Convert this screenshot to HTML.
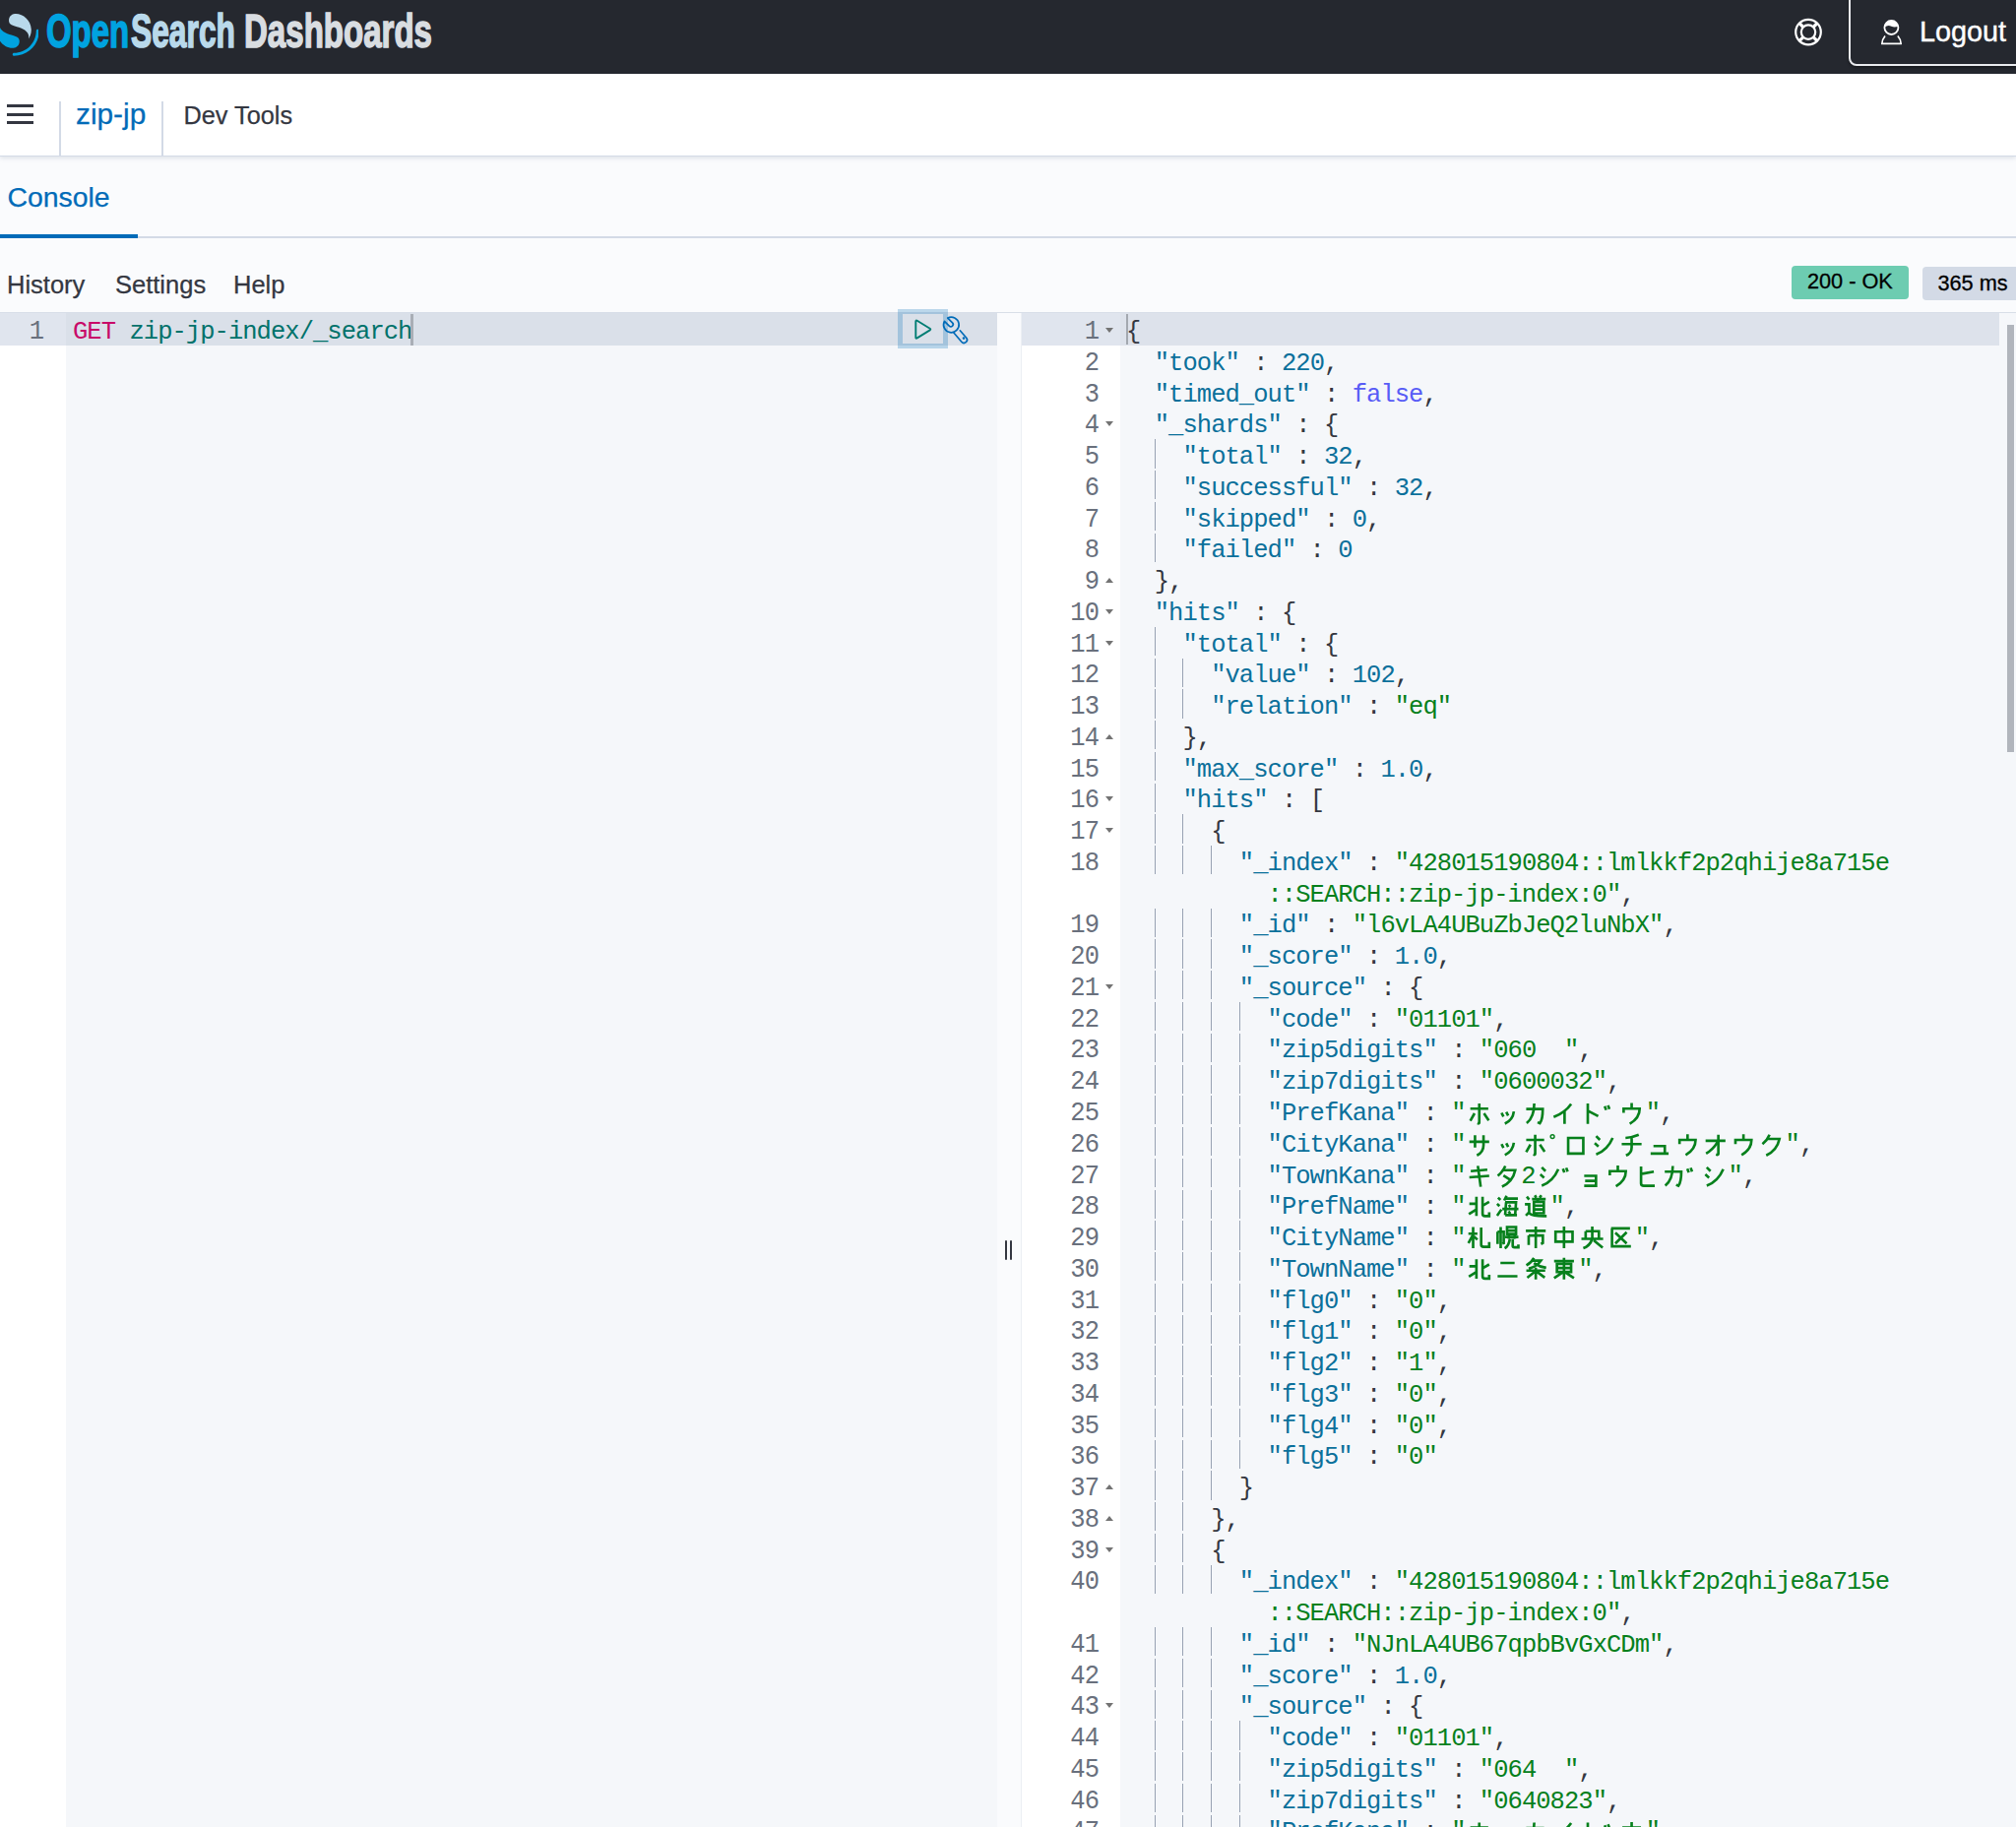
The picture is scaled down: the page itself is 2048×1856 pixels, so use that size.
<!DOCTYPE html>
<html><head><meta charset="utf-8">
<style>
html,body{margin:0;padding:0;width:2048px;height:1856px;overflow:hidden;background:#fafbfd;font-family:"Liberation Sans",sans-serif;}
.a{position:absolute;}
#hdr{position:absolute;left:0;top:0;width:2048px;height:75px;background:#25282f;}
#bc{position:absolute;left:0;top:75px;width:2048px;height:83px;background:#fff;box-shadow:0 1px 0 #d3dae6,0 3px 4px rgba(152,162,179,.25);}
.sep{position:absolute;top:28px;width:1.5px;height:55px;background:#d3dae6;}
.hb{position:absolute;left:7px;width:27px;height:3.2px;background:#343741;}
.txt{position:absolute;white-space:pre;line-height:1;}
#tabline{position:absolute;left:0;top:240px;width:2048px;height:2px;background:#d3dae6;}
#tabul{position:absolute;left:0;top:238px;width:140px;height:4px;background:#006bb8;}
.badge{position:absolute;border-radius:4px;}
/* editors */
#ed{position:absolute;left:0;top:318px;width:1013px;height:1538px;background:#f5f7fa;}
#edg{position:absolute;left:0;top:318px;width:67px;height:1538px;background:#fff;}
#div{position:absolute;left:1013px;top:318px;width:24px;height:1538px;background:#fafbfd;}
#divb{position:absolute;left:1037px;top:318px;width:1px;height:1538px;background:#eceff4;}
#edtop{position:absolute;left:0;top:317px;width:2048px;height:1px;background:#d8dee8;}
#out{position:absolute;left:1138px;top:318px;width:910px;height:1538px;background:#f5f7fa;}
#outg{position:absolute;left:1038px;top:318px;width:100px;height:1538px;background:#fff;}
.al{position:absolute;top:318px;height:32.6px;}
.tx,.ln,.etx{position:absolute;font-family:"Liberation Mono",monospace;font-size:25.5px;line-height:31.76px;height:31.76px;white-space:pre;letter-spacing:-0.95px;}
.tx{margin-top:4px;transform:scaleY(1.02);transform-origin:0 22.67px;}
.ln{left:1030px;width:86px;text-align:right;color:#69707d;margin-top:4px;transform:scaleY(1.07);transform-origin:0 22.67px;}
.p{color:#343741}.k{color:#0b709b}.n{color:#0b709b}.s{color:#06801c}.b{color:#585cf6}
.fo,.fc{position:absolute;left:1122.5px;width:0;height:0;border-left:4.5px solid transparent;border-right:4.5px solid transparent;}
.fo{margin-top:15px;border-top:5px solid #737373;}
.fc{margin-top:15px;border-bottom:5px solid #737373;}
.ig{position:absolute;width:1.2px;height:29.2px;margin-top:1.3px;margin-left:-0.2px;background:#98a2b3;}
</style></head><body>
<div id="hdr">
  <svg class="a" style="left:-3.5px;top:13.8px" width="42.8" height="42.8" viewBox="0 0 64 64">
    <path fill="#00A3E0" d="M61.7374 23.5C60.4878 23.5 59.4748 24.513 59.4748 25.7626C59.4748 44.3813 44.3813 59.4748 25.7626 59.4748C24.513 59.4748 23.5 60.4878 23.5 61.7374C23.5 62.987 24.513 64 25.7626 64C46.8805 64 64 46.8805 64 25.7626C64 24.513 62.987 23.5 61.7374 23.5Z"/>
    <path fill="#B9D9EB" d="M48.0814 38C50.2572 34.4505 52.3615 29.7178 51.9475 23.0921C51.0899 9.36725 38.6589 -1.04463 26.9206 0.0837327C22.3253 0.525465 17.6068 4.2712 18.026 10.9805C18.2082 13.8961 19.6352 15.6169 21.9544 16.9399C24.1618 18.1992 26.9978 18.9969 30.2128 19.9011C34.0962 20.9934 38.6009 22.2203 42.063 24.7717C46.2125 27.8295 49.0491 31.3743 48.0814 38Z"/>
    <path fill="#00A3E0" d="M3.91861 14C1.74276 17.5495 -0.361506 22.2822 0.0524931 28.9079C0.910072 42.6327 13.3411 53.0446 25.0794 51.9163C29.6747 51.4745 34.3932 47.7288 33.974 41.0195C33.7918 38.1039 32.3647 36.3831 30.0456 35.0601C27.8382 33.8008 25.0022 33.0031 21.7872 32.0989C17.9038 31.0066 13.3991 29.7797 9.93694 27.2283C5.78746 24.1704 2.95092 20.6257 3.91861 14Z"/>
  </svg>
  <svg class="a" style="left:0;top:0" width="460" height="75" viewBox="0 0 460 75">
    <text x="47" y="47.7" font-family="Liberation Sans" font-weight="bold" font-size="48.4" fill="#00a3e0" stroke="#00a3e0" stroke-width="1.6" textLength="84" lengthAdjust="spacingAndGlyphs">Open</text>
    <text x="133" y="47.7" font-family="Liberation Sans" font-weight="bold" font-size="48.4" fill="#b9d9eb" stroke="#b9d9eb" stroke-width="1.6" textLength="106" lengthAdjust="spacingAndGlyphs">Search</text>
    <text x="248" y="47.7" font-family="Liberation Sans" font-weight="bold" font-size="48.4" fill="#d9dde1" stroke="#d9dde1" stroke-width="1.6" textLength="191" lengthAdjust="spacingAndGlyphs">Dashboards</text>
  </svg>
  <svg class="a" style="left:1822px;top:18px" width="30" height="30" viewBox="0 0 30 30">
    <circle cx="15" cy="14.6" r="12.8" fill="none" stroke="#fff" stroke-width="2.2"/>
    <circle cx="15" cy="14.6" r="7.2" fill="none" stroke="#fff" stroke-width="2.2"/>
    <g stroke="#fff" stroke-width="3.2"><line x1="6" y1="5.6" x2="9.9" y2="9.5"/><line x1="24" y1="5.6" x2="20.1" y2="9.5"/><line x1="6" y1="23.6" x2="9.9" y2="19.7"/><line x1="24" y1="23.6" x2="20.1" y2="19.7"/></g>
  </svg>
  <div class="a" style="left:1878px;top:-10px;width:200px;height:76.5px;border:2px solid #e9ebee;border-radius:8px;box-shadow:0 2px 3px rgba(0,0,0,.35);box-sizing:border-box;"></div>
  <svg class="a" style="left:1909px;top:19px" width="26" height="28" viewBox="0 0 26 28">
    <circle cx="12.4" cy="9" r="7" fill="none" stroke="#fff" stroke-width="1.8"/>
    <path d="M5.6 8.6 Q9 5.8 12.4 7.8 Q15.5 9.4 19.3 7.8 L18.8 5.5 Q15.5 1.6 12.4 2 Q7.4 2.4 5.6 8.6Z" fill="#fff"/>
    <path d="M6 17.5 Q2.8 21.5 2.8 25.4 L22.2 25.4 Q22.2 21.5 18.9 17.5" fill="none" stroke="#fff" stroke-width="1.7" stroke-linejoin="round"/>
  </svg>
  <div class="txt" style="left:1950px;top:18.2px;font-size:28.8px;color:#fff;-webkit-text-stroke:0.4px #fff;">Logout</div>
</div>
<div id="bc">
  <div class="hb" style="top:31px"></div><div class="hb" style="top:39.6px"></div><div class="hb" style="top:48.2px"></div>
  <div class="sep" style="left:60.3px"></div>
  <div class="sep" style="left:164.2px"></div>
  <div class="txt" style="left:77px;top:25.8px;font-size:29.8px;color:#006bb8;-webkit-text-stroke:0.25px #006bb8;">zip-jp</div>
  <div class="txt" style="left:186.5px;top:29.5px;font-size:25.3px;color:#343741;-webkit-text-stroke:0.25px #343741;">Dev Tools</div>
</div>
<div class="txt" style="left:7.5px;top:185.8px;font-size:28.4px;color:#006bb8;-webkit-text-stroke:0.25px #006bb8;">Console</div>
<div id="tabline"></div><div id="tabul"></div>
<div class="txt" style="left:7px;top:276.5px;font-size:25.5px;color:#343741;-webkit-text-stroke:0.25px #343741;">History</div>
<div class="txt" style="left:117px;top:276.5px;font-size:25.5px;color:#343741;-webkit-text-stroke:0.25px #343741;">Settings</div>
<div class="txt" style="left:237px;top:276.5px;font-size:25.5px;color:#343741;-webkit-text-stroke:0.25px #343741;">Help</div>
<div class="badge" style="left:1820px;top:269.5px;width:119px;height:34.5px;background:#6dccb1;"></div>
<div class="txt" style="left:1836px;top:275.3px;font-size:21.7px;color:#000;-webkit-text-stroke:0.3px #000;">200 - OK</div>
<div class="badge" style="left:1953px;top:271.2px;width:120px;height:34.2px;background:#d3dae6;"></div>
<div class="txt" style="left:1968.5px;top:277px;font-size:21.7px;color:#000;-webkit-text-stroke:0.3px #000;">365 ms</div>

<div id="ed"></div><div id="edg"></div>
<div id="div"></div><div id="divb"></div>
<div id="outg"></div><div id="out"></div>
<div id="edtop"></div>
<div class="al" style="left:0;width:67px;background:#e0e5ee;"></div>
<div class="al" style="left:67px;width:946px;background:#dae0e9;"></div>
<div class="al" style="left:1038px;width:100px;background:#e0e5ee;"></div>
<div class="al" style="left:1138px;width:893px;background:#dde2eb;"></div>
<div class="ln" style="left:0;width:44px;top:318px">1</div>
<div class="tx" style="left:74px;top:318px"><span style="color:#c80a68">GET</span> <span style="color:#00726b">zip-jp-index/_search</span></div>
<div class="a" style="left:416.5px;top:318.5px;width:3px;height:32px;background:#a9aeb6;"></div>
<div class="a" style="left:1144px;top:319px;width:2px;height:31px;background:#a3a8b0;"></div>
<!-- play/wrench -->
<div class="a" style="left:912px;top:314.2px;width:51px;height:39.4px;box-sizing:border-box;border:5px solid rgba(0,107,184,.25);"></div>
<svg class="a" style="left:926px;top:322px" width="24" height="26" viewBox="0 0 24 26">
  <path d="M4.3 4.4 Q4.3 2.9 5.7 3.8 L18.7 11.8 Q19.9 12.6 18.7 13.4 L5.7 21.4 Q4.3 22.3 4.3 20.8 Z" fill="none" stroke="#017d73" stroke-width="1.9" stroke-linejoin="round"/>
</svg>
<svg class="a" style="left:950px;top:315px" width="40" height="40" viewBox="0 0 40 40">
  <g fill="none" stroke="#006bb8" stroke-width="1.7" stroke-linecap="round" stroke-linejoin="round">
  <path d="M9.46 11.32A7.8 7.8 0 1 0 12.72 8.06L17.53 12.87A2.3 2.3 0 0 1 14.27 16.13Z"/>
  <path d="M25.27 20.78L31.76 28.2A3.2 3.2 0 0 1 26.8 32.24L18.67 22.8"/>
  </g>
  <circle cx="29" cy="28.6" r="1.3" fill="#006bb8"/>
</svg>
<!-- divider handle -->
<div class="a" style="left:1021px;top:1259.5px;width:2.2px;height:20px;background:#343741;border-radius:1px;"></div>
<div class="a" style="left:1026.3px;top:1259.5px;width:2.2px;height:20px;background:#343741;border-radius:1px;"></div>
<!-- scrollbar -->
<div class="a" style="left:2039px;top:329.6px;width:7px;height:434px;background:#b1b5bc;"></div>
<div class="ln" style="top:318.00px">1</div>
<div class="fo" style="top:318.00px"></div>
<div class="ln" style="top:349.76px">2</div>
<div class="ln" style="top:381.52px">3</div>
<div class="ln" style="top:413.28px">4</div>
<div class="fo" style="top:413.28px"></div>
<div class="ln" style="top:445.04px">5</div>
<div class="ln" style="top:476.80px">6</div>
<div class="ln" style="top:508.56px">7</div>
<div class="ln" style="top:540.32px">8</div>
<div class="ln" style="top:572.08px">9</div>
<div class="fc" style="top:572.08px"></div>
<div class="ln" style="top:603.84px">10</div>
<div class="fo" style="top:603.84px"></div>
<div class="ln" style="top:635.60px">11</div>
<div class="fo" style="top:635.60px"></div>
<div class="ln" style="top:667.36px">12</div>
<div class="ln" style="top:699.12px">13</div>
<div class="ln" style="top:730.88px">14</div>
<div class="fc" style="top:730.88px"></div>
<div class="ln" style="top:762.64px">15</div>
<div class="ln" style="top:794.40px">16</div>
<div class="fo" style="top:794.40px"></div>
<div class="ln" style="top:826.16px">17</div>
<div class="fo" style="top:826.16px"></div>
<div class="ln" style="top:857.92px">18</div>
<div class="ln" style="top:921.44px">19</div>
<div class="ln" style="top:953.20px">20</div>
<div class="ln" style="top:984.96px">21</div>
<div class="fo" style="top:984.96px"></div>
<div class="ln" style="top:1016.72px">22</div>
<div class="ln" style="top:1048.48px">23</div>
<div class="ln" style="top:1080.24px">24</div>
<div class="ln" style="top:1112.00px">25</div>
<div class="ln" style="top:1143.76px">26</div>
<div class="ln" style="top:1175.52px">27</div>
<div class="ln" style="top:1207.28px">28</div>
<div class="ln" style="top:1239.04px">29</div>
<div class="ln" style="top:1270.80px">30</div>
<div class="ln" style="top:1302.56px">31</div>
<div class="ln" style="top:1334.32px">32</div>
<div class="ln" style="top:1366.08px">33</div>
<div class="ln" style="top:1397.84px">34</div>
<div class="ln" style="top:1429.60px">35</div>
<div class="ln" style="top:1461.36px">36</div>
<div class="ln" style="top:1493.12px">37</div>
<div class="fc" style="top:1493.12px"></div>
<div class="ln" style="top:1524.88px">38</div>
<div class="fc" style="top:1524.88px"></div>
<div class="ln" style="top:1556.64px">39</div>
<div class="fo" style="top:1556.64px"></div>
<div class="ln" style="top:1588.40px">40</div>
<div class="ln" style="top:1651.92px">41</div>
<div class="ln" style="top:1683.68px">42</div>
<div class="ln" style="top:1715.44px">43</div>
<div class="fo" style="top:1715.44px"></div>
<div class="ln" style="top:1747.20px">44</div>
<div class="ln" style="top:1778.96px">45</div>
<div class="ln" style="top:1810.72px">46</div>
<div class="ln" style="top:1842.48px">47</div>
<div class="ln" style="top:1874.24px">48</div>
<div class="ig" style="left:1172.70px;top:445.04px"></div>
<div class="ig" style="left:1172.70px;top:476.80px"></div>
<div class="ig" style="left:1172.70px;top:508.56px"></div>
<div class="ig" style="left:1172.70px;top:540.32px"></div>
<div class="ig" style="left:1172.70px;top:635.60px"></div>
<div class="ig" style="left:1172.70px;top:667.36px"></div>
<div class="ig" style="left:1201.40px;top:667.36px"></div>
<div class="ig" style="left:1172.70px;top:699.12px"></div>
<div class="ig" style="left:1201.40px;top:699.12px"></div>
<div class="ig" style="left:1172.70px;top:730.88px"></div>
<div class="ig" style="left:1172.70px;top:762.64px"></div>
<div class="ig" style="left:1172.70px;top:794.40px"></div>
<div class="ig" style="left:1172.70px;top:826.16px"></div>
<div class="ig" style="left:1201.40px;top:826.16px"></div>
<div class="ig" style="left:1172.70px;top:857.92px"></div>
<div class="ig" style="left:1201.40px;top:857.92px"></div>
<div class="ig" style="left:1230.10px;top:857.92px"></div>
<div class="ig" style="left:1172.70px;top:921.44px"></div>
<div class="ig" style="left:1201.40px;top:921.44px"></div>
<div class="ig" style="left:1230.10px;top:921.44px"></div>
<div class="ig" style="left:1172.70px;top:953.20px"></div>
<div class="ig" style="left:1201.40px;top:953.20px"></div>
<div class="ig" style="left:1230.10px;top:953.20px"></div>
<div class="ig" style="left:1172.70px;top:984.96px"></div>
<div class="ig" style="left:1201.40px;top:984.96px"></div>
<div class="ig" style="left:1230.10px;top:984.96px"></div>
<div class="ig" style="left:1172.70px;top:1016.72px"></div>
<div class="ig" style="left:1201.40px;top:1016.72px"></div>
<div class="ig" style="left:1230.10px;top:1016.72px"></div>
<div class="ig" style="left:1258.80px;top:1016.72px"></div>
<div class="ig" style="left:1172.70px;top:1048.48px"></div>
<div class="ig" style="left:1201.40px;top:1048.48px"></div>
<div class="ig" style="left:1230.10px;top:1048.48px"></div>
<div class="ig" style="left:1258.80px;top:1048.48px"></div>
<div class="ig" style="left:1172.70px;top:1080.24px"></div>
<div class="ig" style="left:1201.40px;top:1080.24px"></div>
<div class="ig" style="left:1230.10px;top:1080.24px"></div>
<div class="ig" style="left:1258.80px;top:1080.24px"></div>
<div class="ig" style="left:1172.70px;top:1112.00px"></div>
<div class="ig" style="left:1201.40px;top:1112.00px"></div>
<div class="ig" style="left:1230.10px;top:1112.00px"></div>
<div class="ig" style="left:1258.80px;top:1112.00px"></div>
<div class="ig" style="left:1172.70px;top:1143.76px"></div>
<div class="ig" style="left:1201.40px;top:1143.76px"></div>
<div class="ig" style="left:1230.10px;top:1143.76px"></div>
<div class="ig" style="left:1258.80px;top:1143.76px"></div>
<div class="ig" style="left:1172.70px;top:1175.52px"></div>
<div class="ig" style="left:1201.40px;top:1175.52px"></div>
<div class="ig" style="left:1230.10px;top:1175.52px"></div>
<div class="ig" style="left:1258.80px;top:1175.52px"></div>
<div class="ig" style="left:1172.70px;top:1207.28px"></div>
<div class="ig" style="left:1201.40px;top:1207.28px"></div>
<div class="ig" style="left:1230.10px;top:1207.28px"></div>
<div class="ig" style="left:1258.80px;top:1207.28px"></div>
<div class="ig" style="left:1172.70px;top:1239.04px"></div>
<div class="ig" style="left:1201.40px;top:1239.04px"></div>
<div class="ig" style="left:1230.10px;top:1239.04px"></div>
<div class="ig" style="left:1258.80px;top:1239.04px"></div>
<div class="ig" style="left:1172.70px;top:1270.80px"></div>
<div class="ig" style="left:1201.40px;top:1270.80px"></div>
<div class="ig" style="left:1230.10px;top:1270.80px"></div>
<div class="ig" style="left:1258.80px;top:1270.80px"></div>
<div class="ig" style="left:1172.70px;top:1302.56px"></div>
<div class="ig" style="left:1201.40px;top:1302.56px"></div>
<div class="ig" style="left:1230.10px;top:1302.56px"></div>
<div class="ig" style="left:1258.80px;top:1302.56px"></div>
<div class="ig" style="left:1172.70px;top:1334.32px"></div>
<div class="ig" style="left:1201.40px;top:1334.32px"></div>
<div class="ig" style="left:1230.10px;top:1334.32px"></div>
<div class="ig" style="left:1258.80px;top:1334.32px"></div>
<div class="ig" style="left:1172.70px;top:1366.08px"></div>
<div class="ig" style="left:1201.40px;top:1366.08px"></div>
<div class="ig" style="left:1230.10px;top:1366.08px"></div>
<div class="ig" style="left:1258.80px;top:1366.08px"></div>
<div class="ig" style="left:1172.70px;top:1397.84px"></div>
<div class="ig" style="left:1201.40px;top:1397.84px"></div>
<div class="ig" style="left:1230.10px;top:1397.84px"></div>
<div class="ig" style="left:1258.80px;top:1397.84px"></div>
<div class="ig" style="left:1172.70px;top:1429.60px"></div>
<div class="ig" style="left:1201.40px;top:1429.60px"></div>
<div class="ig" style="left:1230.10px;top:1429.60px"></div>
<div class="ig" style="left:1258.80px;top:1429.60px"></div>
<div class="ig" style="left:1172.70px;top:1461.36px"></div>
<div class="ig" style="left:1201.40px;top:1461.36px"></div>
<div class="ig" style="left:1230.10px;top:1461.36px"></div>
<div class="ig" style="left:1258.80px;top:1461.36px"></div>
<div class="ig" style="left:1172.70px;top:1493.12px"></div>
<div class="ig" style="left:1201.40px;top:1493.12px"></div>
<div class="ig" style="left:1230.10px;top:1493.12px"></div>
<div class="ig" style="left:1172.70px;top:1524.88px"></div>
<div class="ig" style="left:1201.40px;top:1524.88px"></div>
<div class="ig" style="left:1172.70px;top:1556.64px"></div>
<div class="ig" style="left:1201.40px;top:1556.64px"></div>
<div class="ig" style="left:1172.70px;top:1588.40px"></div>
<div class="ig" style="left:1201.40px;top:1588.40px"></div>
<div class="ig" style="left:1230.10px;top:1588.40px"></div>
<div class="ig" style="left:1172.70px;top:1651.92px"></div>
<div class="ig" style="left:1201.40px;top:1651.92px"></div>
<div class="ig" style="left:1230.10px;top:1651.92px"></div>
<div class="ig" style="left:1172.70px;top:1683.68px"></div>
<div class="ig" style="left:1201.40px;top:1683.68px"></div>
<div class="ig" style="left:1230.10px;top:1683.68px"></div>
<div class="ig" style="left:1172.70px;top:1715.44px"></div>
<div class="ig" style="left:1201.40px;top:1715.44px"></div>
<div class="ig" style="left:1230.10px;top:1715.44px"></div>
<div class="ig" style="left:1172.70px;top:1747.20px"></div>
<div class="ig" style="left:1201.40px;top:1747.20px"></div>
<div class="ig" style="left:1230.10px;top:1747.20px"></div>
<div class="ig" style="left:1258.80px;top:1747.20px"></div>
<div class="ig" style="left:1172.70px;top:1778.96px"></div>
<div class="ig" style="left:1201.40px;top:1778.96px"></div>
<div class="ig" style="left:1230.10px;top:1778.96px"></div>
<div class="ig" style="left:1258.80px;top:1778.96px"></div>
<div class="ig" style="left:1172.70px;top:1810.72px"></div>
<div class="ig" style="left:1201.40px;top:1810.72px"></div>
<div class="ig" style="left:1230.10px;top:1810.72px"></div>
<div class="ig" style="left:1258.80px;top:1810.72px"></div>
<div class="ig" style="left:1172.70px;top:1842.48px"></div>
<div class="ig" style="left:1201.40px;top:1842.48px"></div>
<div class="ig" style="left:1230.10px;top:1842.48px"></div>
<div class="ig" style="left:1258.80px;top:1842.48px"></div>
<div class="ig" style="left:1172.70px;top:1874.24px"></div>
<div class="ig" style="left:1201.40px;top:1874.24px"></div>
<div class="ig" style="left:1230.10px;top:1874.24px"></div>
<div class="ig" style="left:1258.80px;top:1874.24px"></div>
<div class="tx" style="top:318.00px;left:1144.00px"><span class="p">{</span></div>
<div class="tx" style="top:349.76px;left:1144.00px">  <span class="k">&quot;took&quot;</span> <span class="p">:</span> <span class="n">220</span><span class="p">,</span></div>
<div class="tx" style="top:381.52px;left:1144.00px">  <span class="k">&quot;timed_out&quot;</span> <span class="p">:</span> <span class="b">false</span><span class="p">,</span></div>
<div class="tx" style="top:413.28px;left:1144.00px">  <span class="k">&quot;_shards&quot;</span> <span class="p">:</span> <span class="p">{</span></div>
<div class="tx" style="top:445.04px;left:1144.00px">    <span class="k">&quot;total&quot;</span> <span class="p">:</span> <span class="n">32</span><span class="p">,</span></div>
<div class="tx" style="top:476.80px;left:1144.00px">    <span class="k">&quot;successful&quot;</span> <span class="p">:</span> <span class="n">32</span><span class="p">,</span></div>
<div class="tx" style="top:508.56px;left:1144.00px">    <span class="k">&quot;skipped&quot;</span> <span class="p">:</span> <span class="n">0</span><span class="p">,</span></div>
<div class="tx" style="top:540.32px;left:1144.00px">    <span class="k">&quot;failed&quot;</span> <span class="p">:</span> <span class="n">0</span></div>
<div class="tx" style="top:572.08px;left:1144.00px">  <span class="p">}</span><span class="p">,</span></div>
<div class="tx" style="top:603.84px;left:1144.00px">  <span class="k">&quot;hits&quot;</span> <span class="p">:</span> <span class="p">{</span></div>
<div class="tx" style="top:635.60px;left:1144.00px">    <span class="k">&quot;total&quot;</span> <span class="p">:</span> <span class="p">{</span></div>
<div class="tx" style="top:667.36px;left:1144.00px">      <span class="k">&quot;value&quot;</span> <span class="p">:</span> <span class="n">102</span><span class="p">,</span></div>
<div class="tx" style="top:699.12px;left:1144.00px">      <span class="k">&quot;relation&quot;</span> <span class="p">:</span> <span class="s">&quot;eq&quot;</span></div>
<div class="tx" style="top:730.88px;left:1144.00px">    <span class="p">}</span><span class="p">,</span></div>
<div class="tx" style="top:762.64px;left:1144.00px">    <span class="k">&quot;max_score&quot;</span> <span class="p">:</span> <span class="n">1.0</span><span class="p">,</span></div>
<div class="tx" style="top:794.40px;left:1144.00px">    <span class="k">&quot;hits&quot;</span> <span class="p">:</span> <span class="p">[</span></div>
<div class="tx" style="top:826.16px;left:1144.00px">      <span class="p">{</span></div>
<div class="tx" style="top:857.92px;left:1144.00px">        <span class="k">&quot;_index&quot;</span> <span class="p">:</span> <span class="s">&quot;428015190804::lmlkkf2p2qhije8a715e</span></div>
<div class="tx" style="top:889.68px;left:1287.50px"><span class="s">::SEARCH::zip-jp-index:0&quot;</span><span class="p">,</span></div>
<div class="tx" style="top:921.44px;left:1144.00px">        <span class="k">&quot;_id&quot;</span> <span class="p">:</span> <span class="s">&quot;l6vLA4UBuZbJeQ2luNbX&quot;</span><span class="p">,</span></div>
<div class="tx" style="top:953.20px;left:1144.00px">        <span class="k">&quot;_score&quot;</span> <span class="p">:</span> <span class="n">1.0</span><span class="p">,</span></div>
<div class="tx" style="top:984.96px;left:1144.00px">        <span class="k">&quot;_source&quot;</span> <span class="p">:</span> <span class="p">{</span></div>
<div class="tx" style="top:1016.72px;left:1144.00px">          <span class="k">&quot;code&quot;</span> <span class="p">:</span> <span class="s">&quot;01101&quot;</span><span class="p">,</span></div>
<div class="tx" style="top:1048.48px;left:1144.00px">          <span class="k">&quot;zip5digits&quot;</span> <span class="p">:</span> <span class="s">&quot;060  &quot;</span><span class="p">,</span></div>
<div class="tx" style="top:1080.24px;left:1144.00px">          <span class="k">&quot;zip7digits&quot;</span> <span class="p">:</span> <span class="s">&quot;0600032&quot;</span><span class="p">,</span></div>
<div class="tx" style="top:1112.00px;left:1144.00px">          <span class="k">&quot;PrefKana&quot;</span> <span class="p">:</span> <span class="s">&quot;<span style="display:inline-block;width:28.40px"></span><span style="display:inline-block;width:28.40px"></span><span style="display:inline-block;width:28.40px"></span><span style="display:inline-block;width:28.40px"></span><span style="display:inline-block;width:28.40px"></span><span style="display:inline-block;width:12.80px"></span><span style="display:inline-block;width:28.40px"></span>&quot;</span><span class="p">,</span></div>
<div class="tx" style="top:1143.76px;left:1144.00px">          <span class="k">&quot;CityKana&quot;</span> <span class="p">:</span> <span class="s">&quot;<span style="display:inline-block;width:28.40px"></span><span style="display:inline-block;width:28.40px"></span><span style="display:inline-block;width:28.40px"></span><span style="display:inline-block;width:12.80px"></span><span style="display:inline-block;width:28.40px"></span><span style="display:inline-block;width:28.40px"></span><span style="display:inline-block;width:28.40px"></span><span style="display:inline-block;width:28.40px"></span><span style="display:inline-block;width:28.40px"></span><span style="display:inline-block;width:28.40px"></span><span style="display:inline-block;width:28.40px"></span><span style="display:inline-block;width:28.40px"></span>&quot;</span><span class="p">,</span></div>
<div class="tx" style="top:1175.52px;left:1144.00px">          <span class="k">&quot;TownKana&quot;</span> <span class="p">:</span> <span class="s">&quot;<span style="display:inline-block;width:28.40px"></span><span style="display:inline-block;width:28.40px"></span>2<span style="display:inline-block;width:28.40px"></span><span style="display:inline-block;width:12.80px"></span><span style="display:inline-block;width:28.40px"></span><span style="display:inline-block;width:28.40px"></span><span style="display:inline-block;width:28.40px"></span><span style="display:inline-block;width:28.40px"></span><span style="display:inline-block;width:12.80px"></span><span style="display:inline-block;width:28.40px"></span>&quot;</span><span class="p">,</span></div>
<div class="tx" style="top:1207.28px;left:1144.00px">          <span class="k">&quot;PrefName&quot;</span> <span class="p">:</span> <span class="s">&quot;<span style="display:inline-block;width:28.70px"></span><span style="display:inline-block;width:28.70px"></span><span style="display:inline-block;width:28.70px"></span>&quot;</span><span class="p">,</span></div>
<div class="tx" style="top:1239.04px;left:1144.00px">          <span class="k">&quot;CityName&quot;</span> <span class="p">:</span> <span class="s">&quot;<span style="display:inline-block;width:28.70px"></span><span style="display:inline-block;width:28.70px"></span><span style="display:inline-block;width:28.70px"></span><span style="display:inline-block;width:28.70px"></span><span style="display:inline-block;width:28.70px"></span><span style="display:inline-block;width:28.70px"></span>&quot;</span><span class="p">,</span></div>
<div class="tx" style="top:1270.80px;left:1144.00px">          <span class="k">&quot;TownName&quot;</span> <span class="p">:</span> <span class="s">&quot;<span style="display:inline-block;width:28.70px"></span><span style="display:inline-block;width:28.70px"></span><span style="display:inline-block;width:28.70px"></span><span style="display:inline-block;width:28.70px"></span>&quot;</span><span class="p">,</span></div>
<div class="tx" style="top:1302.56px;left:1144.00px">          <span class="k">&quot;flg0&quot;</span> <span class="p">:</span> <span class="s">&quot;0&quot;</span><span class="p">,</span></div>
<div class="tx" style="top:1334.32px;left:1144.00px">          <span class="k">&quot;flg1&quot;</span> <span class="p">:</span> <span class="s">&quot;0&quot;</span><span class="p">,</span></div>
<div class="tx" style="top:1366.08px;left:1144.00px">          <span class="k">&quot;flg2&quot;</span> <span class="p">:</span> <span class="s">&quot;1&quot;</span><span class="p">,</span></div>
<div class="tx" style="top:1397.84px;left:1144.00px">          <span class="k">&quot;flg3&quot;</span> <span class="p">:</span> <span class="s">&quot;0&quot;</span><span class="p">,</span></div>
<div class="tx" style="top:1429.60px;left:1144.00px">          <span class="k">&quot;flg4&quot;</span> <span class="p">:</span> <span class="s">&quot;0&quot;</span><span class="p">,</span></div>
<div class="tx" style="top:1461.36px;left:1144.00px">          <span class="k">&quot;flg5&quot;</span> <span class="p">:</span> <span class="s">&quot;0&quot;</span></div>
<div class="tx" style="top:1493.12px;left:1144.00px">        <span class="p">}</span></div>
<div class="tx" style="top:1524.88px;left:1144.00px">      <span class="p">}</span><span class="p">,</span></div>
<div class="tx" style="top:1556.64px;left:1144.00px">      <span class="p">{</span></div>
<div class="tx" style="top:1588.40px;left:1144.00px">        <span class="k">&quot;_index&quot;</span> <span class="p">:</span> <span class="s">&quot;428015190804::lmlkkf2p2qhije8a715e</span></div>
<div class="tx" style="top:1620.16px;left:1287.50px"><span class="s">::SEARCH::zip-jp-index:0&quot;</span><span class="p">,</span></div>
<div class="tx" style="top:1651.92px;left:1144.00px">        <span class="k">&quot;_id&quot;</span> <span class="p">:</span> <span class="s">&quot;NJnLA4UB67qpbBvGxCDm&quot;</span><span class="p">,</span></div>
<div class="tx" style="top:1683.68px;left:1144.00px">        <span class="k">&quot;_score&quot;</span> <span class="p">:</span> <span class="n">1.0</span><span class="p">,</span></div>
<div class="tx" style="top:1715.44px;left:1144.00px">        <span class="k">&quot;_source&quot;</span> <span class="p">:</span> <span class="p">{</span></div>
<div class="tx" style="top:1747.20px;left:1144.00px">          <span class="k">&quot;code&quot;</span> <span class="p">:</span> <span class="s">&quot;01101&quot;</span><span class="p">,</span></div>
<div class="tx" style="top:1778.96px;left:1144.00px">          <span class="k">&quot;zip5digits&quot;</span> <span class="p">:</span> <span class="s">&quot;064  &quot;</span><span class="p">,</span></div>
<div class="tx" style="top:1810.72px;left:1144.00px">          <span class="k">&quot;zip7digits&quot;</span> <span class="p">:</span> <span class="s">&quot;0640823&quot;</span><span class="p">,</span></div>
<div class="tx" style="top:1842.48px;left:1144.00px">          <span class="k">&quot;PrefKana&quot;</span> <span class="p">:</span> <span class="s">&quot;<span style="display:inline-block;width:28.40px"></span><span style="display:inline-block;width:28.40px"></span><span style="display:inline-block;width:28.40px"></span><span style="display:inline-block;width:28.40px"></span><span style="display:inline-block;width:28.40px"></span><span style="display:inline-block;width:12.80px"></span><span style="display:inline-block;width:28.40px"></span>&quot;</span><span class="p">,</span></div>
<div class="tx" style="top:1874.24px;left:1144.00px">          <span class="k">&quot;CityKana&quot;</span> <span class="p">:</span> <span class="s">&quot;<span style="display:inline-block;width:28.40px"></span><span style="display:inline-block;width:28.40px"></span><span style="display:inline-block;width:28.40px"></span><span style="display:inline-block;width:12.80px"></span><span style="display:inline-block;width:28.40px"></span><span style="display:inline-block;width:28.40px"></span><span style="display:inline-block;width:28.40px"></span><span style="display:inline-block;width:28.40px"></span><span style="display:inline-block;width:28.40px"></span><span style="display:inline-block;width:28.40px"></span><span style="display:inline-block;width:28.40px"></span><span style="display:inline-block;width:28.40px"></span>&quot;</span><span class="p">,</span></div>
<svg class="a" style="left:0;top:0;overflow:visible" width="2048" height="1856"><defs><path id="gff8e" d="M12 30H88 M50 8V90Q50 95 42 92 M30 50L12 82 M70 50L90 80"/><path id="gff6f" d="M26 48L34 64 M46 44L54 60 M78 42Q74 78 40 94"/><path id="gff76" d="M12 32H82Q82 75 70 92L60 88 M46 8Q46 65 14 92"/><path id="gff72" d="M84 10Q60 45 10 66 M56 40V95"/><path id="gff84" d="M36 8V95 M38 40L80 62"/><path id="gff9e" d="M22 20L28 36 M36 16L42 32"/><path id="gff9f" d="M37.5 16m-8 0a8 8 0 1 0 16 0a8 8 0 1 0 -16 0" stroke-width="6"/><path id="gff73" d="M50 6V28 M16 48V30H84Q84 70 42 94"/><path id="gff7b" d="M8 38H92 M32 10V62 M68 10V52Q68 82 40 96"/><path id="gff9b" d="M18 22H82V88H18Z"/><path id="gff7c" d="M18 14L34 30 M12 44L28 58 M18 92Q66 74 88 22"/><path id="gff81" d="M80 8Q52 20 24 22 M8 48H92 M50 22V62Q50 86 26 96"/><path id="gff6d" d="M24 56H72V88 M12 88H88"/><path id="gff75" d="M8 34H92 M62 8V90Q62 95 52 92 M58 40Q40 70 10 88"/><path id="gff78" d="M42 8Q32 32 12 48 M30 26H84Q74 74 28 96"/><path id="gff77" d="M14 30L84 24 M8 56L92 50 M44 8L56 96"/><path id="gff80" d="M42 8Q32 32 10 50 M28 26H84Q74 74 28 96 M34 48L68 70"/><path id="gff6e" d="M26 50H76V92H26 M30 71H76"/><path id="gff8b" d="M30 42L84 32 M30 10V82Q30 92 42 92H88"/><path id="g5317" d="M38 10V92 M8 40H38 M6 84L38 64 M64 10V82Q64 92 74 92H92V76 M64 48L92 32"/><path id="g6d77" d="M10 14L20 24 M6 40L16 50 M6 90L24 64 M46 6L36 26 M40 18H94 M40 34H86L82 92 M44 34L40 88 M28 62H96 M56 44L62 54 M54 72L62 82 M40 88H90"/><path id="g9053" d="M12 10L22 22 M4 42H22V76L8 90 M22 80Q40 94 96 92 M46 4L52 14 M74 4L66 14 M34 20H92 M62 20L56 30 M42 32H84V80H42Z M42 48H84 M42 64H84"/><path id="g672d" d="M4 34H42 M24 6V96 M24 38L4 74 M28 46L42 60 M58 8V80Q58 90 68 90H92V70"/><path id="g5e4c" d="M8 26V78 M8 26H34V74L28 76 M21 6V96 M48 6H86V36H48Z M48 21H86 M40 48H96 M56 40L54 56 M80 40L82 56 M60 56Q56 86 38 96 M72 56V86Q72 92 80 92H96V80"/><path id="g5e02" d="M50 4V18 M8 22H92 M50 24V96 M20 42V82 M20 42H80V74L72 78"/><path id="g4e2d" d="M14 26H86V68H14Z M50 4V96"/><path id="g592e" d="M22 24H78V56 M22 24V56 M4 56H96 M50 4V56Q40 86 12 96 M56 62L94 94"/><path id="g533a" d="M10 12H90 M14 12V88H94 M28 30L76 76 M76 28L28 76"/><path id="g4e8c" d="M20 26H80 M8 82H92"/><path id="g6761" d="M42 4Q30 26 10 36 M34 16H72Q56 40 20 50 M42 26Q66 42 94 46 M10 58H90 M50 46V96 M44 64L14 88 M56 64L88 88"/><path id="g6771" d="M8 18H92 M50 4V96 M20 30H80V64H20Z M20 47H80 M44 66L8 90 M56 66L92 90"/></defs><g fill="none" stroke="#06801c" stroke-width="11" stroke-linecap="butt" stroke-linejoin="miter"><use href="#gff8e" transform="translate(1490.75 1119.00) scale(0.24)"/><use href="#gff6f" transform="translate(1519.15 1119.00) scale(0.24)"/><use href="#gff76" transform="translate(1547.55 1119.00) scale(0.24)"/><use href="#gff72" transform="translate(1575.95 1119.00) scale(0.24)"/><use href="#gff84" transform="translate(1604.35 1119.00) scale(0.24)"/><use href="#gff9e" transform="translate(1624.90 1119.00) scale(0.24)"/><use href="#gff73" transform="translate(1645.55 1119.00) scale(0.24)"/><use href="#gff7b" transform="translate(1490.75 1150.76) scale(0.24)"/><use href="#gff6f" transform="translate(1519.15 1150.76) scale(0.24)"/><use href="#gff8e" transform="translate(1547.55 1150.76) scale(0.24)"/><use href="#gff9f" transform="translate(1568.10 1150.76) scale(0.24)"/><use href="#gff9b" transform="translate(1588.75 1150.76) scale(0.24)"/><use href="#gff7c" transform="translate(1617.15 1150.76) scale(0.24)"/><use href="#gff81" transform="translate(1645.55 1150.76) scale(0.24)"/><use href="#gff6d" transform="translate(1673.95 1150.76) scale(0.24)"/><use href="#gff73" transform="translate(1702.35 1150.76) scale(0.24)"/><use href="#gff75" transform="translate(1730.75 1150.76) scale(0.24)"/><use href="#gff73" transform="translate(1759.15 1150.76) scale(0.24)"/><use href="#gff78" transform="translate(1787.55 1150.76) scale(0.24)"/><use href="#gff77" transform="translate(1490.75 1182.52) scale(0.24)"/><use href="#gff80" transform="translate(1519.15 1182.52) scale(0.24)"/><use href="#gff7c" transform="translate(1561.90 1182.52) scale(0.24)"/><use href="#gff9e" transform="translate(1582.45 1182.52) scale(0.24)"/><use href="#gff6e" transform="translate(1603.10 1182.52) scale(0.24)"/><use href="#gff73" transform="translate(1631.50 1182.52) scale(0.24)"/><use href="#gff8b" transform="translate(1659.90 1182.52) scale(0.24)"/><use href="#gff76" transform="translate(1688.30 1182.52) scale(0.24)"/><use href="#gff9e" transform="translate(1708.85 1182.52) scale(0.24)"/><use href="#gff7c" transform="translate(1729.50 1182.52) scale(0.24)"/><use href="#g5317" transform="translate(1490.75 1213.28) scale(0.24)"/><use href="#g6d77" transform="translate(1519.45 1213.28) scale(0.24)"/><use href="#g9053" transform="translate(1548.15 1213.28) scale(0.24)"/><use href="#g672d" transform="translate(1490.75 1245.04) scale(0.24)"/><use href="#g5e4c" transform="translate(1519.45 1245.04) scale(0.24)"/><use href="#g5e02" transform="translate(1548.15 1245.04) scale(0.24)"/><use href="#g4e2d" transform="translate(1576.85 1245.04) scale(0.24)"/><use href="#g592e" transform="translate(1605.55 1245.04) scale(0.24)"/><use href="#g533a" transform="translate(1634.25 1245.04) scale(0.24)"/><use href="#g5317" transform="translate(1490.75 1276.80) scale(0.24)"/><use href="#g4e8c" transform="translate(1519.45 1276.80) scale(0.24)"/><use href="#g6761" transform="translate(1548.15 1276.80) scale(0.24)"/><use href="#g6771" transform="translate(1576.85 1276.80) scale(0.24)"/><use href="#gff8e" transform="translate(1490.75 1849.48) scale(0.24)"/><use href="#gff6f" transform="translate(1519.15 1849.48) scale(0.24)"/><use href="#gff76" transform="translate(1547.55 1849.48) scale(0.24)"/><use href="#gff72" transform="translate(1575.95 1849.48) scale(0.24)"/><use href="#gff84" transform="translate(1604.35 1849.48) scale(0.24)"/><use href="#gff9e" transform="translate(1624.90 1849.48) scale(0.24)"/><use href="#gff73" transform="translate(1645.55 1849.48) scale(0.24)"/><use href="#gff7b" transform="translate(1490.75 1881.24) scale(0.24)"/><use href="#gff6f" transform="translate(1519.15 1881.24) scale(0.24)"/><use href="#gff8e" transform="translate(1547.55 1881.24) scale(0.24)"/><use href="#gff9f" transform="translate(1568.10 1881.24) scale(0.24)"/><use href="#gff9b" transform="translate(1588.75 1881.24) scale(0.24)"/><use href="#gff7c" transform="translate(1617.15 1881.24) scale(0.24)"/><use href="#gff81" transform="translate(1645.55 1881.24) scale(0.24)"/><use href="#gff6d" transform="translate(1673.95 1881.24) scale(0.24)"/><use href="#gff73" transform="translate(1702.35 1881.24) scale(0.24)"/><use href="#gff75" transform="translate(1730.75 1881.24) scale(0.24)"/><use href="#gff73" transform="translate(1759.15 1881.24) scale(0.24)"/><use href="#gff78" transform="translate(1787.55 1881.24) scale(0.24)"/></g></svg>
</body></html>
